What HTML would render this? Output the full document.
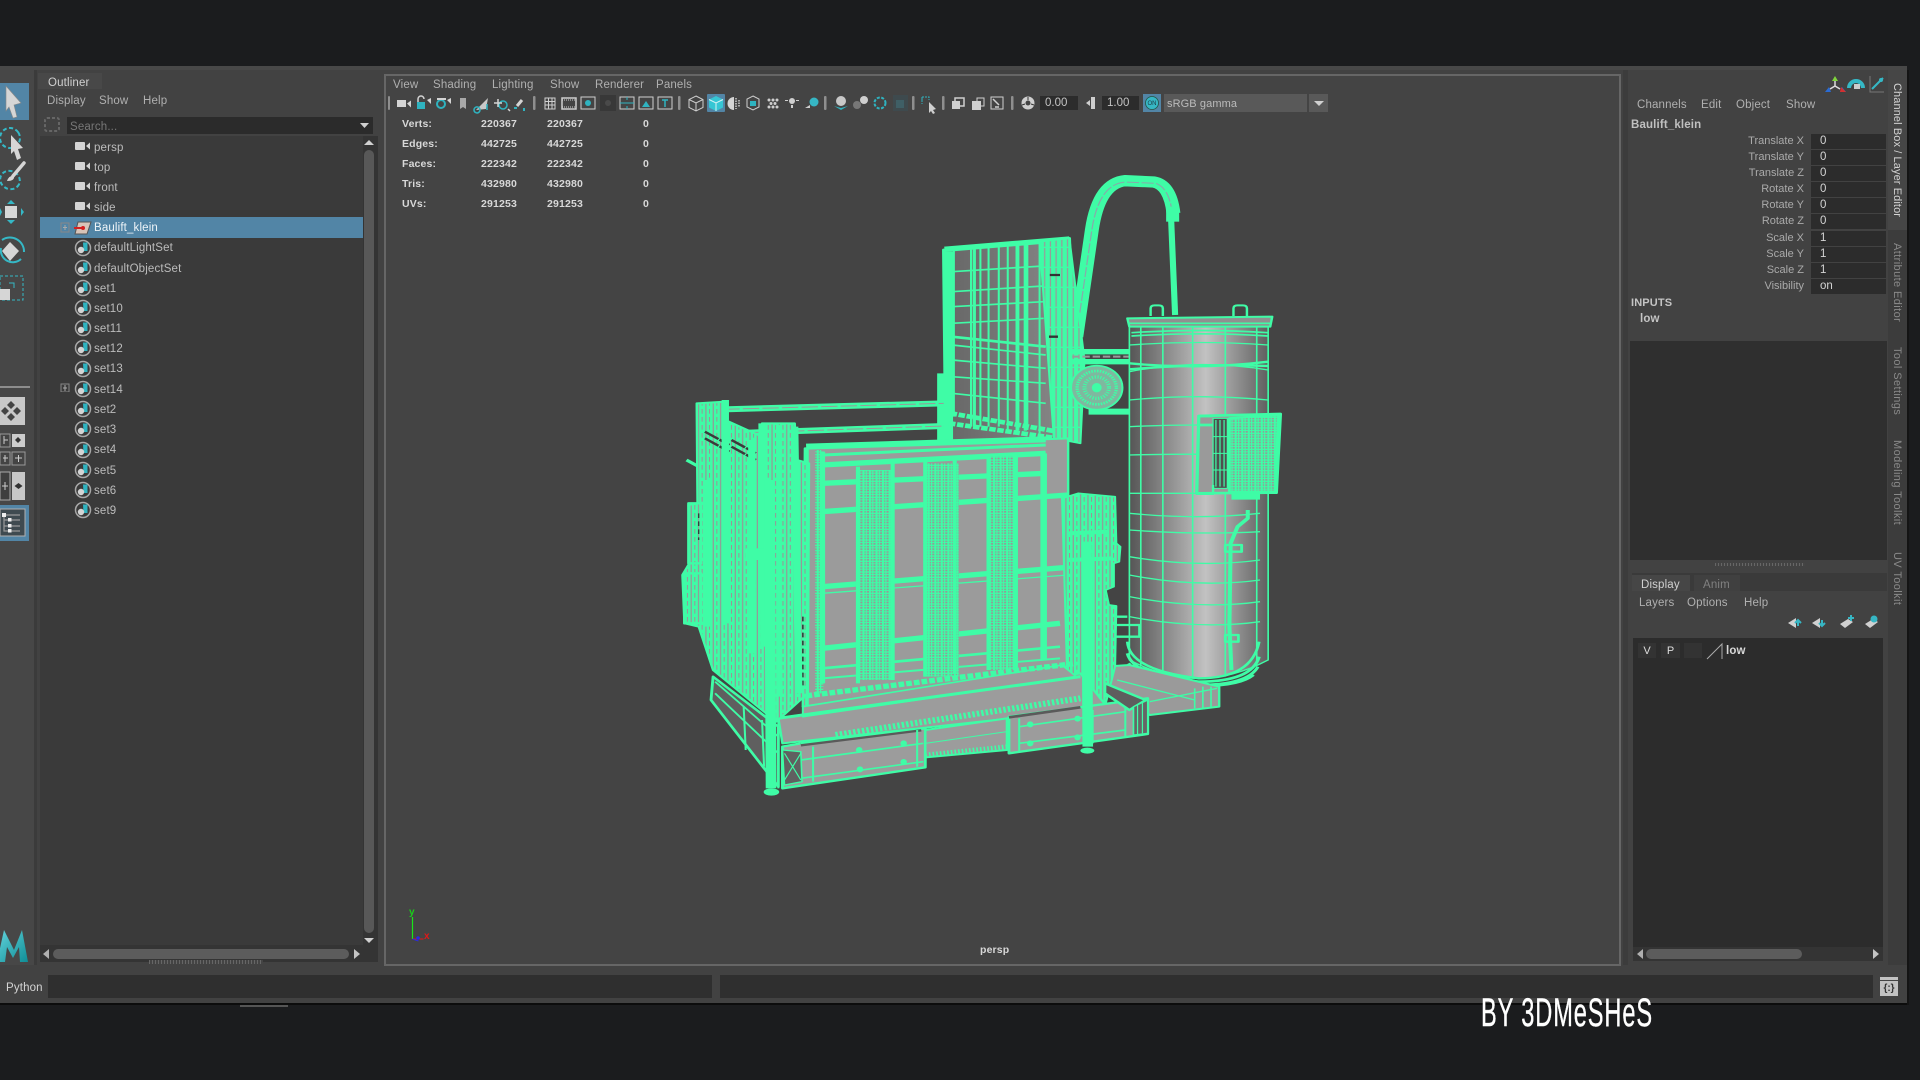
<!DOCTYPE html>
<html><head><meta charset="utf-8"><title>Maya</title>
<style>
html,body{margin:0;padding:0;width:1920px;height:1080px;overflow:hidden;background:#1b1c1e;font-family:"Liberation Sans",sans-serif;}
.a{position:absolute}
.t{position:absolute;white-space:nowrap;font-size:11.5px;line-height:14px;color:#c4c4c4;letter-spacing:.15px;margin-top:1px}
.o{color:#bcbcbc}
.b{font-weight:bold;color:#d8d8d8;font-size:10.5px}
.c{position:absolute;left:1811px;width:75px;height:15px;background:#2c2c2c;color:#d4d4d4;font-size:11.5px;line-height:15px;text-indent:9px;margin-top:1px}
.l{position:absolute;right:116px;font-size:11px;line-height:15px;color:#aaa;white-space:nowrap;margin-top:1px}
.v{position:absolute;white-space:nowrap;font-size:11px;line-height:14px;color:#8a8a8a;transform-origin:0 0;transform:rotate(90deg);letter-spacing:.4px}
</style></head><body>
<svg width="0" height="0" style="position:absolute">
<defs>
<symbol id="cam" viewBox="0 0 16 10"><rect x="0" y="1" width="10" height="8" rx="1" fill="#d4d4d4"/><path d="M11 5 15 1.500V8.500Z" fill="#d4d4d4"/></symbol>
<symbol id="set" viewBox="0 0 18 18"><circle cx="9" cy="9" r="7.500" fill="none" stroke="#a8a8a8" stroke-width="1.500"/><path d="M9 3.500h4.500v8.500h-4z" fill="#2fb3c0"/><circle cx="7" cy="11" r="3.200" fill="#d4d4d4"/></symbol>
<pattern id="h" width="14" height="60" patternUnits="userSpaceOnUse"><rect width="14" height="60" fill="#3ffca6"/><rect x="3" width="3" height="60" fill="#9a9a9a"/><rect y="20" width="14" height="4" fill="#3ffca6"/></pattern>
<pattern id="h2" width="18" height="24" patternUnits="userSpaceOnUse"><rect width="18" height="24" fill="#3ffca6"/><rect x="3" y="0" width="3" height="24" fill="#979797"/><rect x="12" y="3" width="2.500" height="14" fill="#979797"/></pattern>
<pattern id="h3" width="16" height="16" patternUnits="userSpaceOnUse"><rect width="16" height="16" fill="#979797"/><rect width="5" height="16" fill="#3ffca6"/><rect x="8" width="3" height="16" fill="#3ffca6"/><rect y="2" width="16" height="4" fill="#3ffca6"/><rect y="10" width="16" height="3" fill="#3ffca6"/></pattern>
<linearGradient id="tank" x1="0" x2="1" y1="0" y2="0"><stop offset="0" stop-color="#555"/><stop offset=".15" stop-color="#737373"/><stop offset=".55" stop-color="#c2c2c2"/><stop offset=".85" stop-color="#808080"/><stop offset="1" stop-color="#5f5f5f"/></linearGradient>
<linearGradient id="panel" x1="0" x2="1" y1="0" y2="0"><stop offset="0" stop-color="#666"/><stop offset="1" stop-color="#8a8a8a"/></linearGradient>
<linearGradient id="mm" x1="0" x2="1" y1="0" y2="1"><stop offset="0" stop-color="#63d4dc"/><stop offset="1" stop-color="#0f8d96"/></linearGradient>
</defs></svg>

<!-- main frame -->
<div class="a" style="left:0;top:66px;width:1907px;height:937px;background:#424242;border-top:4px solid #484848;box-sizing:border-box"></div>
<div class="a" style="left:0;top:1003px;width:1907px;height:2px;background:#0c0c0c"></div>
<div class="a" style="left:1907px;top:70px;width:2px;height:935px;background:#141414"></div>
<div class="a" style="left:240px;top:1005px;width:48px;height:2px;background:#555"></div>

<!-- left toolbar -->
<div class="a" style="left:0;top:70px;width:34px;height:895px;background:#474747"></div>
<div class="a" style="left:34px;top:70px;width:3px;height:895px;background:#3b3b3b"></div>
<div class="a" style="left:0;top:83px;width:29px;height:37px;background:#5285a6"></div>
<div class="a" style="left:0;top:505px;width:29px;height:36px;background:#5285a6"></div>
<svg class="a" style="left:0;top:70px" width="34" height="900" viewBox="0 0 34 900">
<path d="M6 16 21 33 14 35 17 47 13 48 9 37 6 41Z" fill="#d6d6d6" stroke="#888" stroke-width=".6"/>
<ellipse cx="10" cy="68" rx="10" ry="10" transform="rotate(-35 10 68)" fill="none" stroke="#35b8c6" stroke-width="2" stroke-dasharray="4 2.500"/>
<path d="M11 65 23 78 18 79 21 88 17 90 14 81 11 84Z" fill="#d6d6d6"/>
<ellipse cx="10" cy="110" rx="10" ry="9" transform="rotate(25 10 110)" fill="none" stroke="#35b8c6" stroke-width="2" stroke-dasharray="4 2.500"/>
<path d="M24 93 13 106" stroke="#d6d6d6" stroke-width="3.500" stroke-linecap="round"/><path d="M7 111q2-6 7-5 1 5-7 5z" fill="#d6d6d6"/>
<rect x="5" y="136" width="12" height="12" fill="#d6d6d6"/><path d="M11 130l4 4h-8zM11 154l4-4h-8zM24 142l-3-4v8zM0 138v8l2-4z" fill="#35b8c6"/>
<path d="M2 170a14 14 0 0 1 22 12" fill="none" stroke="#35b8c6" stroke-width="2"/><path d="M1 178a12 12 0 0 0 20 11" fill="none" stroke="#35b8c6" stroke-width="2"/>
<path d="M10 172 19 181 10 191 2 181Z" fill="#d6d6d6"/>
<rect x="0" y="206" width="23" height="24" fill="none" stroke="#35b8c6" stroke-width="1" stroke-dasharray="3 2"/><path d="M9 213h5v5" fill="none" stroke="#35b8c6"/><rect x="0" y="219" width="10" height="11" fill="#d6d6d6"/>
<rect x="0" y="316" width="30" height="2" fill="#8d8d8d"/>
<rect x="0" y="327" width="25" height="28" fill="#c8c8c8"/><path d="M11 331l4 4-4 4-4-4zM5 337l4 4-4 4-4-4zM17 337l4 4-4 4-4-4zM11 343l4 4-4 4-4-4z" fill="#444"/>
<rect x="0" y="364" width="10" height="13" fill="#444" stroke="#999"/><path d="M4 370h4M4 366v8" stroke="#ccc"/>
<rect x="12" y="364" width="13" height="13" fill="#ccc"/><path d="M18 367l3 3-3 3-3-3z" fill="#333"/>
<rect x="0" y="382" width="10" height="13" fill="#444" stroke="#999"/><rect x="12" y="382" width="13" height="13" fill="#444" stroke="#999"/><path d="M15 388h7M18.500 385v7M3 388h5M5 385v7" stroke="#ccc"/>
<rect x="0" y="402" width="10" height="28" fill="#3f3f3f" stroke="#aaa"/><path d="M2 416h6M5 412v8" stroke="#ccc"/>
<rect x="12" y="402" width="13" height="28" fill="#c8c8c8"/><path d="M18.500 413l4 3-4 3-4-3z" fill="#333"/>
<rect x="0" y="439" width="25" height="27" fill="#3f4a50" stroke="#b0b0b0"/><path d="M4 445h16M10 450h10M10 456h10M10 461h10M4 445v16h5M4 450h5M4 456h5" stroke="#999" stroke-width="1.200" fill="none"/><rect x="2" y="443" width="4" height="4" fill="#eee"/><rect x="8" y="448" width="3.500" height="3.500" fill="#eee"/><rect x="8" y="454" width="3.500" height="3.500" fill="#eee"/><rect x="8" y="459" width="3.500" height="3.500" fill="#eee"/>
<path d="M-3 892 4 860 14 880 22 860 28 892H20L19 877 13 888 7 877 5 892Z" fill="url(#mm)"/>
</svg>

<!-- outliner -->
<div class="a" style="left:38px;top:73px;width:64px;height:16px;background:#484848"></div>
<div class="t" style="left:48px;top:75px;color:#d0d0d0">Outliner</div>
<div class="a" style="left:38px;top:89px;width:340px;height:876px;background:#424242"></div>
<div class="t" style="left:47px;top:93px;color:#b0b0b0">Display</div>
<div class="t" style="left:99px;top:93px;color:#b0b0b0">Show</div>
<div class="t" style="left:143px;top:93px;color:#b0b0b0">Help</div>
<svg class="a" style="left:44px;top:116px" width="16" height="17"><rect x="1" y="2" width="14" height="13" rx="2" fill="none" stroke="#666" stroke-width="2" stroke-dasharray="3 2"/></svg>
<div class="a" style="left:67px;top:117px;width:306px;height:17px;background:#2b2b2b"></div>
<div class="t" style="left:70px;top:119px;color:#777">Search...</div>
<svg class="a" style="left:359px;top:122px" width="12" height="8"><path d="M1 1h9L5.500 6z" fill="#d0d0d0"/></svg>
<div class="a" style="left:40px;top:136px;width:323px;height:809px;background:#3a3a3a"></div>
<div class="a" style="left:363px;top:136px;width:15px;height:826px;background:#343434"></div>
<div class="a" style="left:364px;top:150px;width:10px;height:783px;background:#585858;border-radius:5px"></div>
<svg class="a" style="left:362px;top:138px" width="15" height="10"><path d="M2 7h10L7 2z" fill="#d0d0d0"/></svg>
<svg class="a" style="left:362px;top:936px" width="15" height="9"><path d="M2 2h10L7 7z" fill="#d0d0d0"/></svg>
<div class="a" style="left:40px;top:945px;width:323px;height:17px;background:#343434"></div>
<div class="a" style="left:53px;top:949px;width:296px;height:10px;background:#5c5c5c;border-radius:5px"></div>
<svg class="a" style="left:41px;top:948px" width="320" height="12"><path d="M8 1v10L2 6z" fill="#b0b0b0"/><path d="M313 1v10l6-5z" fill="#c4c4c4"/></svg>
<div class="a" style="left:149px;top:960px;width:114px;height:4px;background:repeating-linear-gradient(90deg,#666 0 1px,#444 1px 3px)"></div>
<div class="a" style="left:40px;top:217px;width:323px;height:21px;background:#5285a6"></div>
<svg class="a" style="left:75px;top:140px" width="16" height="80">
<use href="#cam" x="0" y="1" width="16" height="10"/><use href="#cam" x="0" y="21" width="16" height="10"/><use href="#cam" x="0" y="41" width="16" height="10"/><use href="#cam" x="0" y="61" width="16" height="10"/>
</svg>
<svg class="a" style="left:73px;top:219px" width="20" height="18"><path d="M5 3h13l-4 12H2z" fill="#d8c4b8" stroke="#555"/><path d="M1 9h9" stroke="#d41f1f" stroke-width="2"/><circle cx="10" cy="9" r="2" fill="#d41f1f"/></svg>
<svg class="a" style="left:74px;top:238px" width="18" height="262">
<use href="#set" y="1" width="18" height="18"/><use href="#set" y="21" width="18" height="18"/><use href="#set" y="41" width="18" height="18"/><use href="#set" y="61" width="18" height="18"/><use href="#set" y="81" width="18" height="18"/><use href="#set" y="101" width="18" height="18"/><use href="#set" y="122" width="18" height="18"/><use href="#set" y="142" width="18" height="18"/><use href="#set" y="162" width="18" height="18"/><use href="#set" y="182" width="18" height="18"/><use href="#set" y="203" width="18" height="18"/><use href="#set" y="223" width="18" height="18"/><use href="#set" y="243" width="18" height="18"/>
</svg>
<svg class="a" style="left:74px;top:501px" width="18" height="18"><use href="#set" width="18" height="18"/></svg>
<svg class="a" style="left:60px;top:222px" width="11" height="170"><rect x="1" y="1" width="8" height="9" fill="none" stroke="#888"/><path d="M3 5.500h4M5 3v5" stroke="#aaa"/><rect x="1" y="162" width="8" height="8" fill="none" stroke="#888"/><path d="M3 166h4M5 163v6" stroke="#aaa"/></svg>
<div class="t o" style="left:94px;top:139.500px">persp</div>
<div class="t o" style="left:94px;top:159.500px">top</div>
<div class="t o" style="left:94px;top:179.500px">front</div>
<div class="t o" style="left:94px;top:199.500px">side</div>
<div class="t" style="left:94px;top:220px;color:#eef4f8">Baulift_klein</div>
<div class="t o" style="left:94px;top:240px">defaultLightSet</div>
<div class="t o" style="left:94px;top:260.500px">defaultObjectSet</div>
<div class="t o" style="left:94px;top:280.500px">set1</div>
<div class="t o" style="left:94px;top:300.500px">set10</div>
<div class="t o" style="left:94px;top:320.500px">set11</div>
<div class="t o" style="left:94px;top:341px">set12</div>
<div class="t o" style="left:94px;top:361px">set13</div>
<div class="t o" style="left:94px;top:381.500px">set14</div>
<div class="t o" style="left:94px;top:402px">set2</div>
<div class="t o" style="left:94px;top:422px">set3</div>
<div class="t o" style="left:94px;top:442px">set4</div>
<div class="t o" style="left:94px;top:462.500px">set5</div>
<div class="t o" style="left:94px;top:482.500px">set6</div>
<div class="t o" style="left:94px;top:503px">set9</div>

<!-- viewport -->
<div class="a" style="left:384px;top:74px;width:1237px;height:892px;background:#444;border:2px solid #666;box-sizing:border-box"></div>
<div class="t" style="left:393px;top:77px;color:#b0b0b0">View</div>
<div class="t" style="left:433px;top:77px;color:#b0b0b0">Shading</div>
<div class="t" style="left:492px;top:77px;color:#b0b0b0">Lighting</div>
<div class="t" style="left:550px;top:77px;color:#b0b0b0">Show</div>
<div class="t" style="left:595px;top:77px;color:#b0b0b0">Renderer</div>
<div class="t" style="left:656px;top:77px;color:#b0b0b0">Panels</div>

<!-- viewport toolbar icons -->
<svg class="a" style="left:384px;top:92px" width="1000" height="24" viewBox="384 92 1000 24" fill="none">
<g fill="#8f8f8f"><rect x="388" y="96" width="2" height="14" rx="1"/><rect x="533" y="96" width="2.500" height="14" rx="1"/><rect x="678" y="96" width="2.500" height="14" rx="1"/><rect x="824" y="96" width="2.500" height="14" rx="1"/><rect x="912" y="96" width="2.500" height="14" rx="1"/><rect x="942" y="96" width="2.500" height="14" rx="1"/><rect x="1011" y="96" width="2.500" height="14" rx="1"/></g>
<g fill="#d4d4d4"><rect x="397" y="100" width="9" height="7"/><path d="M407 103.500l4-3v7z"/></g>
<rect x="417" y="102" width="8" height="7" fill="#2fb3c0"/><path d="M418 102v-3a3 3 0 0 1 6 0" stroke="#d4d4d4" stroke-width="1.500"/><path d="M427 100l4-2v6z" fill="#d4d4d4"/>
<circle cx="441" cy="104" r="4" stroke="#2fb3c0" stroke-width="2"/><path d="M437 99h9" stroke="#d4d4d4" stroke-width="2"/><path d="M447 100l4-2v6z" fill="#d4d4d4"/>
<path d="M460 98h6v11l-3-2-3 2z" fill="#a8a8a8"/>
<path d="M476 110 488 98l-2 11z" fill="#c8c8c8"/><path d="M480 110a3 3 0 1 1 0-.1M487 104v6" stroke="#2fb3c0" stroke-width="1.500"/>
<circle cx="503" cy="105" r="4" stroke="#2fb3c0" stroke-width="1.500"/><path d="M498 99v8M494 103h8M508 109l2 2" stroke="#d4d4d4" stroke-width="1.500"/>
<path d="M522 100l-5 6" stroke="#d4d4d4" stroke-width="3"/><path d="M514 108h3M524 108v3" stroke="#2fb3c0" stroke-width="2"/>
<path d="M545 98h10v11h-10zM545 101.500h10M545 105h10M548.500 98v11M552 98v11" stroke="#cfcfcf"/>
<rect x="562" y="98" width="14" height="11" stroke="#cfcfcf" stroke-width="1.500"/><path d="M562 100h14M562 107h14" stroke="#cfcfcf" stroke-dasharray="1 1"/>
<rect x="581" y="97" width="14" height="12" stroke="#cfcfcf"/><circle cx="588" cy="103" r="3" fill="#2fb3c0"/>
<rect x="600" y="95" width="16" height="16" fill="#383838"/><circle cx="608" cy="103" r="3" fill="#4a4a4a"/>
<rect x="620" y="97" width="14" height="12" stroke="#cfcfcf"/><path d="M620 103h14M627 97v3M627 106v3" stroke="#2fb3c0"/>
<rect x="639" y="97" width="14" height="12" stroke="#cfcfcf"/><path d="M642 107l4-6 4 6z" fill="#2fb3c0"/>
<rect x="658" y="97" width="14" height="12" stroke="#cfcfcf"/><path d="M662 100h6M665 100v7" stroke="#2fb3c0" stroke-width="1.500"/>
<path d="M696 96l7 3.500v8l-7 3.500-7-3.500v-8zM689 99.500l7 3.500 7-3.500M696 103v8" stroke="#cfcfcf"/>
<rect x="707" y="94" width="18" height="18" rx="1" fill="#5285a6"/><path d="M716 96l7 3.500v8l-7 3.500-7-3.500v-8z" fill="#36c6d4"/><path d="M709 99.500l7 3.500 7-3.500M716 103v8" stroke="#d4f2f5"/>
<path d="M734 97a6.500 6.500 0 0 0 0 13z" fill="#d4d4d4"/><path d="M736 98v11M739 100v7" stroke="#aaa" stroke-width="2" stroke-dasharray="1.500 1"/>
<path d="M753 96l6 3v8l-6 3-6-3v-8z" stroke="#cfcfcf"/><path d="M750 101h6v5h-6z" fill="#2fb3c0"/>
<g fill="#cfcfcf"><circle cx="769" cy="100" r="1.500"/><circle cx="773" cy="100" r="1.500"/><circle cx="777" cy="100" r="1.500"/><circle cx="771" cy="103.500" r="1.500"/><circle cx="775" cy="103.500" r="1.500"/><circle cx="769" cy="107" r="1.500"/><circle cx="773" cy="107" r="1.500"/><circle cx="777" cy="107" r="1.500"/><circle cx="792" cy="101" r="3"/><path d="M791 105h2v3h-2zM785 100h3v1h-3zM796 100h3v1h-3z"/></g>
<circle cx="814" cy="102" r="4.500" fill="#36b6c4"/><path d="M805 108l5-3v3z" fill="#cfcfcf"/>
<circle cx="841" cy="101" r="5" fill="#c8c8c8"/><path d="M834 106l7 4 7-4-7 2z" fill="#2fb3c0"/>
<circle cx="864" cy="100" r="4" fill="#cfcfcf"/><circle cx="857" cy="105" r="4" fill="#777"/>
<circle cx="880" cy="103" r="5.500" stroke="#2fb3c0" stroke-width="2" stroke-dasharray="3 1.500"/>
<rect x="893" y="95" width="15" height="16" fill="#3e4a4e"/><rect x="896" y="100" width="8" height="8" fill="#3f5f66"/>
<path d="M922 100v-3h7v3M922 97v7" stroke="#2fb3c0" stroke-dasharray="2 1"/><path d="M929 102l7 7-3 1 2 3-2 1-2-3-2 2z" fill="#cfcfcf"/>
<rect x="952" y="101" width="8" height="8" fill="#cfcfcf"/><rect x="955" y="98" width="9" height="8" stroke="#cfcfcf" stroke-width="1.500"/>
<rect x="972" y="101" width="9" height="9" fill="#cfcfcf"/><path d="M977 101v-3h7v8h-3" stroke="#cfcfcf"/>
<rect x="991" y="97" width="12" height="12" stroke="#cfcfcf"/><path d="M993 99l6 6M999 107h-4" stroke="#cfcfcf" stroke-width="1.500"/>
<circle cx="1028" cy="103" r="6.500" fill="#cfcfcf"/><circle cx="1028" cy="103" r="2.500" fill="#444"/><path d="M1028 97v3M1022 105l3-1M1034 105l-3-1" stroke="#333"/>
<path d="M1086 103l4-3v6z" fill="#cfcfcf"/><rect x="1091" y="97" width="4" height="12" fill="#cfcfcf"/>
</svg>
<div class="a" style="left:1040px;top:96px;width:38px;height:14px;background:#2c2c2c;color:#c4c4c4;font-size:11.500px;line-height:15px;text-indent:5px">0.00</div>
<div class="a" style="left:1102px;top:96px;width:37px;height:14px;background:#2c2c2c;color:#c4c4c4;font-size:11.500px;line-height:15px;text-indent:5px">1.00</div>
<div class="a" style="left:1143px;top:94px;width:18px;height:18px;background:#5285a6"></div>
<svg class="a" style="left:1143px;top:94px" width="18" height="18"><circle cx="9" cy="9" r="6.500" fill="#36b6c4" stroke="#254" stroke-width=".8"/><text x="9" y="11" font-size="6" fill="#1d3a44" text-anchor="middle" font-family="Liberation Sans">ON</text></svg>
<div class="a" style="left:1164px;top:94px;width:143px;height:18px;background:#595959;color:#bbb;font-size:11px;line-height:21px;text-indent:3px;letter-spacing:.1px">sRGB gamma</div>
<div class="a" style="left:1309px;top:94px;width:19px;height:18px;background:#595959"></div>
<svg class="a" style="left:1313px;top:100px" width="12" height="7"><path d="M1 1h10L6 6z" fill="#d0d0d0"/></svg>

<!-- stats -->
<div class="t b" style="left:402px;top:115.500px">Verts:</div><div class="t b" style="left:481px;top:115.500px">220367</div><div class="t b" style="left:547px;top:115.500px">220367</div><div class="t b" style="left:643px;top:115.500px">0</div>
<div class="t b" style="left:402px;top:135.500px">Edges:</div><div class="t b" style="left:481px;top:135.500px">442725</div><div class="t b" style="left:547px;top:135.500px">442725</div><div class="t b" style="left:643px;top:135.500px">0</div>
<div class="t b" style="left:402px;top:156px">Faces:</div><div class="t b" style="left:481px;top:156px">222342</div><div class="t b" style="left:547px;top:156px">222342</div><div class="t b" style="left:643px;top:156px">0</div>
<div class="t b" style="left:402px;top:176px">Tris:</div><div class="t b" style="left:481px;top:176px">432980</div><div class="t b" style="left:547px;top:176px">432980</div><div class="t b" style="left:643px;top:176px">0</div>
<div class="t b" style="left:402px;top:196px">UVs:</div><div class="t b" style="left:481px;top:196px">291253</div><div class="t b" style="left:547px;top:196px">291253</div><div class="t b" style="left:643px;top:196px">0</div>
<div class="t b" style="left:980px;top:942px;font-size:10.500px">persp</div>

<!-- axis -->
<svg class="a" style="left:400px;top:905px" width="40" height="40"><path d="M12.500 12v22" stroke="#19e619" stroke-width="1.200"/><path d="M12.500 34h11" stroke="#e01818"/><path d="M12.500 34l6 2" stroke="#2a2ae6"/><circle cx="18" cy="33" r="1.800" fill="#2a2ae6"/><text x="9" y="10" font-size="10" font-weight="bold" fill="#19d019" font-family="Liberation Sans">y</text><text x="24" y="34" font-size="10" font-weight="bold" fill="#e01818" font-family="Liberation Sans">x</text></svg>

<!-- 3D MODEL -->
<svg class="a" style="left:660px;top:160px" width="640" height="660" viewBox="0 0 640 660" fill="none" stroke-linejoin="round">
<g transform="scale(.40816 .33333)" stroke="#3ffca6">
 <!-- hose -->
 <path d="M1020 530 1058 210Q1075 70 1140 62L1210 66Q1250 75 1258 160" stroke-width="34"/>
 <path d="M1020 530 1058 210Q1075 72 1140 66L1215 70Q1248 85 1255 160" stroke="#8aa" stroke-width="3" stroke-dasharray="30 6"/>
 <path d="M1252 170 1262 465" stroke-width="15"/>
 <path d="M1256 140v45" stroke-width="32"/>
 <!-- back panel -->
 <path d="M695 270 1003 235 1020 840 700 850Z" fill="url(#panel)" stroke-width="8"/>
 <path d="M707 275V850M690 640V850" stroke-width="22"/>
 <path d="M697 268 1003 237" stroke-width="16"/>
 <path d="M720 270V770M762 268V800M785 262V800M805 260V800M830 258V800M852 256V810M878 254V810M900 250V810M930 245V820" stroke-width="5"/>
 <path d="M770 268V800M875 252V812M895 250V812" stroke-width="8"/>
 <path d="M715 335 940 318M715 395 940 378M715 440 940 425M715 490 940 475M715 530 945 560M715 555 945 585M715 600 945 625M715 650 945 670M715 700 945 730" stroke-width="5"/>
 <path d="M715 530 945 560" stroke-width="8"/>
 <path d="M712 760 975 815M708 790 975 835" stroke-width="14" stroke-dasharray="16 4"/>
 <path d="M930 245 1003 235 1040 600 1030 850 965 835Z" fill="url(#h)" stroke-width="5"/>
 <path d="M955 345h25M953 530h22" stroke="#333" stroke-width="7"/>
 <!-- brackets + wheel -->
 <path d="M1010 575H1160M1010 605H1160" stroke-width="16"/><path d="M1010 590H1160" stroke="#999" stroke-width="6" stroke-dasharray="18 7"/>
 <path d="M1050 755H1160" stroke-width="18"/><path d="M1160 735V800" stroke-width="8"/>
 <ellipse cx="1070" cy="683" rx="63" ry="66" fill="#7fb89f" stroke-width="5"/>
 <ellipse cx="1070" cy="683" rx="48" ry="50" stroke-width="8" stroke-dasharray="4 3" />
 <ellipse cx="1070" cy="683" rx="30" ry="32" stroke-width="10" stroke-dasharray="3 4"/>
 <ellipse cx="1070" cy="683" rx="12" ry="14" fill="#3ffca6" stroke="none"/>
 <!-- rails -->
 <path d="M155 748 695 730" stroke-width="18"/><path d="M155 748 695 730" stroke="#999" stroke-width="3" stroke-dasharray="40 8"/>
 <path d="M170 820 695 798" stroke-width="18"/><path d="M170 820 695 798" stroke="#999" stroke-width="3" stroke-dasharray="40 8"/>
 <path d="M65 900 95 920" stroke-width="9"/>
 <!-- tank -->
 <path d="M1150 490H1490V1500Q1320 1610 1150 1500Z" fill="url(#tank)" stroke-width="4"/>
 <g stroke-width="4">
  <path d="M1178 480V1520M1232 480V1540M1305 480V1555M1385 480V1550M1462 480V1510"/>
  <path d="M1150 555Q1320 540 1490 555M1150 635Q1320 595 1490 630M1150 720Q1320 700 1490 720M1150 800Q1320 790 1490 800M1150 885Q1320 880 1490 885M1150 1000Q1320 1000 1490 1000M1150 1060Q1320 1080 1470 1060M1150 1110Q1320 1125 1470 1115M1150 1190Q1320 1225 1470 1200M1150 1245Q1320 1285 1470 1260M1150 1310Q1320 1350 1470 1325M1150 1370Q1320 1410 1470 1385"/>
 </g>
 <path d="M1145 475 1500 470 1495 500 1150 500Z" fill="#909090" stroke-width="6"/>
 <path d="M1150 490H1495M1155 518Q1320 505 1490 518M1155 528Q1320 515 1490 528" stroke-width="5"/>
 <path d="M1150 610Q1320 630 1490 605M1150 628Q1320 610 1490 618" stroke-width="7"/>
 <path d="M1202 468V445Q1202 436 1212 436H1222Q1232 436 1232 445V468M1405 468V445Q1405 436 1415 436H1428Q1438 436 1438 445V468" stroke-width="6"/>
 <!-- tank bottom rings -->
 <path d="M1145 1445Q1150 1530 1320 1555Q1450 1555 1468 1445" stroke-width="7"/>
 <path d="M1145 1480Q1160 1550 1320 1565Q1450 1565 1468 1490M1148 1510Q1180 1565 1320 1575Q1440 1575 1465 1520" stroke-width="8"/>
 <path d="M1155 1535Q1230 1590 1320 1578 1420 1580 1455 1545" stroke-width="6"/>
 <!-- box on tank -->
 <path d="M1320 768 1520 762 1510 998 1315 1000Z" fill="#9a9a9a" stroke-width="8"/>
 <path d="M1322 768H1355M1322 795H1360" stroke-width="8"/>
 <path d="M1355 775H1390V985H1355Z" fill="#4f4f4f" stroke-width="3"/>
 <path d="M1362 780V980M1372 780V980M1382 780V980M1355 830H1390M1355 880H1390M1355 930H1390" stroke-width="3"/>
 <path d="M1395 775 1515 765 1508 995H1395Z" fill="url(#h3)" stroke-width="7"/>
 <path d="M1400 1010H1470" stroke-width="18"/><path d="M1315 975V1002H1355V975" stroke-width="6"/>
 <!-- pipe on tank -->
 <path d="M1440 1050 1440 1075 1415 1100 1398 1150 1395 1400 1400 1530" stroke-width="10"/>
 <path d="M1385 1155h40v20h-40zM1385 1425h32v20h-32z" stroke-width="7"/>
</g>
<g transform="translate(0 320) scale(.40816 .33333)" stroke="#3ffca6">
 <!-- base right extension -->
 <path d="M1090 560 1150 555 1370 620 1370 680 1200 705 1090 610Z" fill="#9a9a9a" stroke-width="6"/>
 <path d="M1120 600 1310 660M1200 665 1365 625M1310 625V685M1330 620V685M1350 620V685" stroke-width="4"/>
 <path d="M1115 435H1175V470H1115ZM1115 410H1145" stroke-width="7"/>
 <!-- left side base -->
 <path d="M130 590 290 740 290 920 125 660Z" fill="#5f5f5f" stroke-width="7"/>
 <path d="M135 605 290 770M135 640 290 820M205 680 210 810M250 720 255 860" stroke-width="5"/>
 <path d="M140 510 240 610 240 600 130 470Z" fill="#666" stroke-width="6"/>
 <path d="M145 520 185 565 145 565Z" fill="#333" stroke="none"/>
 <!-- main panel -->
 <path d="M355 -95 1000 -125 1000 560 350 680Z" fill="#9b9b9b" stroke-width="6"/>
 <path d="M358 -100 945 -122" stroke-width="18"/>
 <path d="M400 -75 945 -105" stroke-width="9"/>
 <path d="M395 -45 945 -80" stroke-width="16"/>
 <path d="M380 -90H400V640H380Z" fill="url(#h3)" stroke="none"/>
 <path d="M398 -85V610" stroke-width="13"/>
 <path d="M360 -95V680" stroke-width="9"/>
 <path d="M398 10 945 -20" stroke-width="16"/>
 <path d="M395 95 1000 45" stroke-width="16"/>
 <path d="M398 320 1000 262" stroke-width="16"/>
 <path d="M398 340 1000 285" stroke-width="4"/>
 <path d="M398 505 980 430" stroke-width="16"/>
 <path d="M398 565 980 500" stroke-width="8"/>
 <path d="M398 595 980 535" stroke-width="6"/>
 <path d="M480 -30H568V600H480ZM645 -50H732V590H645ZM800 -70H876V570H800Z" fill="url(#h3)" stroke="none"/>
 <path d="M485 -40V610M570 -50V600M650 -60V590M722 -60V580M805 -70V570M872 -75V570" stroke-width="10"/>
 <path d="M940 -80V540" stroke-width="16"/>
 <!-- right mass -->
 <path d="M985 55 1025 40 1115 50 1118 190 1128 200 1125 245 1112 250 1112 320 1092 330 1100 375 1118 378 1115 560 1090 680 1000 685Z" fill="url(#h2)" stroke-width="5"/>
 <path d="M1000 160 1100 155M1000 240 1110 235" stroke-width="12"/>
 <!-- deck -->
 <path d="M290 715 1030 580 1095 680 1045 690 300 790Z" fill="#9c9c9c" stroke-width="6"/>
 <path d="M350 680 985 555 1020 590 350 710Z" fill="#9c9c9c" stroke-width="5"/>
 <path d="M340 650 1020 550" stroke-width="16" stroke-dasharray="14 5"/>
 <path d="M290 715 1030 590" stroke-width="9"/>
 <path d="M430 765 1030 655" stroke-width="18" stroke-dasharray="6 5"/>
 <!-- left mass -->
 <path d="M90 -230 160 -235 160 -180 250 -130 250 -170 330 -170 335 -60 365 -50 362 640 285 725 130 570 95 440 60 430 55 285 72 250 70 75 92 70Z" fill="url(#h2)" stroke-width="6"/>
 <path d="M110 -145 170 -105M110 -125 170 -85M175 -120 235 -80M175 -100 235 -60" stroke="#3b3b3b" stroke-width="7" stroke-dasharray="40 3"/>
 <path d="M155 40V120M230 90V120M232 300V350M350 410V620M95 100V180" stroke="#3a3a3a" stroke-width="4" stroke-dasharray="14 10"/>
 <path d="M160 -240V430M225 -120V520M115 0V440M250 -170 255 500M330 -160 340 640" stroke-width="18"/>
 <path d="M290 -165 295 650" stroke-width="12"/>
 <path d="M60 280H100V430H60ZM70 70H100V250H70Z" stroke-width="7"/>
 <path d="M210 205H280V240H210Z" fill="#3ffca6" stroke="none"/>
 <!-- drawers -->
 <path d="M300 800 345 790 650 745 650 862 300 925Z" fill="#9c9c9c" stroke-width="7"/>
 <path d="M345 795 640 750" stroke="#5a5a5a" stroke-width="9"/>
 <path d="M345 790 640 745M345 840 645 790M345 895 645 845M375 800V905M630 750V860" stroke-width="5"/>
 <path d="M300 810 345 815 348 905 305 915Z" fill="#606060" stroke-width="4"/><path d="M305 820 345 900M345 820 305 900" stroke-width="3"/>
 <ellipse cx="488" cy="810" rx="8" ry="9" fill="#3ffca6" stroke="none"/><ellipse cx="490" cy="868" rx="8" ry="9" fill="#3ffca6" stroke="none"/><ellipse cx="597" cy="790" rx="8" ry="9" fill="#3ffca6" stroke="none"/><ellipse cx="597" cy="846" rx="8" ry="9" fill="#3ffca6" stroke="none"/>
 <path d="M650 750 850 715 850 810 650 832Z" fill="#9c9c9c" stroke-width="6"/>
 <path d="M650 790 850 755" stroke-width="3"/><path d="M650 825 850 800" stroke-width="14" stroke-dasharray="4 5"/>
 <path d="M855 710 1195 655 1195 762 855 820Z" fill="#9c9c9c" stroke-width="7"/>
 <path d="M855 712 1030 682" stroke="#5a5a5a" stroke-width="8"/>
 <path d="M880 740 1140 695M880 790 1140 750M880 715V815M1060 690V790M1140 665V770" stroke-width="5"/>
 <path d="M1090 610 1190 660 1150 690 1090 640Z" fill="#5e5e5e" stroke-width="7"/>
 <path d="M1160 680 1195 660 1195 760 1160 765Z" fill="#666" stroke-width="4"/>
 <path d="M1170 675V765M1182 665V760" stroke-width="3"/>
 <ellipse cx="907" cy="733" rx="8" ry="9" fill="#3ffca6" stroke="none"/><ellipse cx="1023" cy="716" rx="8" ry="9" fill="#3ffca6" stroke="none"/><ellipse cx="907" cy="790" rx="8" ry="9" fill="#3ffca6" stroke="none"/><ellipse cx="1023" cy="772" rx="8" ry="9" fill="#3ffca6" stroke="none"/>
 <!-- posts -->
 <path d="M1045 185 1048 800" stroke-width="26"/>
 <ellipse cx="1047" cy="812" rx="17" ry="9" fill="#3ffca6" stroke="none"/>
 <path d="M268 0 272 925" stroke-width="26"/>
 <ellipse cx="273" cy="936" rx="19" ry="11" fill="#3ffca6" stroke="none"/>
 <path d="M290 715V925" stroke-width="5"/>
</g>
</svg>

<!-- right panel -->
<div class="a" style="left:1623px;top:70px;width:5px;height:895px;background:#3c3c3c"></div>
<svg class="a" style="left:1824px;top:72px" width="65" height="22">
<path d="M11 4l3 5h-6z" fill="#7fd43c"/><path d="M11 9v5M11 14l-5 3M11 14l5 3" stroke="#ddd" stroke-width="1.500"/><path d="M1 20l4-5 2 5zM22 20l-4-5-2 5z" fill="#2a6bd4"/><path d="M17 15l5 5h-6z" fill="#d43030"/>
<path d="M25 16a7 7 0 0 1 14 0" fill="none" stroke="#35b8c6" stroke-width="4"/><rect x="30" y="12" width="6" height="5" fill="#ccc"/>
<path d="M48 17 59 6" stroke="#35b8c6" stroke-width="2"/><path d="M46 4v16h14" stroke="#777" fill="none"/><circle cx="57" cy="8" r="2" fill="#35b8c6"/>
</svg>
<div class="t" style="left:1637px;top:97px;color:#b0b0b0">Channels</div>
<div class="t" style="left:1701px;top:97px;color:#b0b0b0">Edit</div>
<div class="t" style="left:1736px;top:97px;color:#b0b0b0">Object</div>
<div class="t" style="left:1786px;top:97px;color:#b0b0b0">Show</div>
<div class="t" style="left:1631px;top:117px;font-weight:bold;color:#c0c0c0;font-size:11.500px">Baulift_klein</div>
<div class="l" style="top:133px">Translate X</div><div class="c" style="top:133px">0</div>
<div class="l" style="top:149px">Translate Y</div><div class="c" style="top:149px">0</div>
<div class="l" style="top:165px">Translate Z</div><div class="c" style="top:165px">0</div>
<div class="l" style="top:181px">Rotate X</div><div class="c" style="top:181px">0</div>
<div class="l" style="top:197px">Rotate Y</div><div class="c" style="top:197px">0</div>
<div class="l" style="top:213px">Rotate Z</div><div class="c" style="top:213px">0</div>
<div class="l" style="top:230px">Scale X</div><div class="c" style="top:230px">1</div>
<div class="l" style="top:246px">Scale Y</div><div class="c" style="top:246px">1</div>
<div class="l" style="top:262px">Scale Z</div><div class="c" style="top:262px">1</div>
<div class="l" style="top:278px">Visibility</div><div class="c" style="top:278px">on</div>
<div class="t" style="left:1631px;top:295px;font-weight:bold;color:#c4c4c4;font-size:11px">INPUTS</div>
<div class="t" style="left:1640px;top:311px;font-weight:bold;color:#c4c4c4;font-size:11.500px">low</div>
<div class="a" style="left:1630px;top:341px;width:257px;height:219px;background:#2f2f2f"></div>
<div class="a" style="left:1715px;top:563px;width:90px;height:3px;background:repeating-linear-gradient(90deg,#666 0 1px,#444 1px 3px)"></div>
<div class="a" style="left:1632px;top:573px;width:255px;height:18px;background:#3a3a3a"></div>
<div class="a" style="left:1632px;top:575px;width:58px;height:16px;background:#464646"></div>
<div class="a" style="left:1694px;top:575px;width:46px;height:16px;background:#404040"></div>
<div class="t" style="left:1641px;top:577px;color:#d0d0d0">Display</div>
<div class="t" style="left:1703px;top:577px;color:#808080">Anim</div>
<div class="t" style="left:1639px;top:595px;color:#b0b0b0">Layers</div>
<div class="t" style="left:1687px;top:595px;color:#b0b0b0">Options</div>
<div class="t" style="left:1744px;top:595px;color:#b0b0b0">Help</div>
<svg class="a" style="left:1785px;top:615px" width="95" height="16">
<path d="M3 8 11 3V13Z" fill="#d0d0d0"/><path d="M13 11V5M10 8l3-3 3 3" stroke="#36b6c4" stroke-width="2" fill="none"/>
<path d="M27 8 35 3V13Z" fill="#d0d0d0"/><path d="M37 5v6M34 8l3 3 3-3" stroke="#36b6c4" stroke-width="2" fill="none"/>
<path d="M55 9l8-5 5 3-8 6z" fill="#d0d0d0"/><path d="M63 3h6M66 0v6" stroke="#36b6c4" stroke-width="2"/>
<path d="M80 9l8-5 5 3-8 6z" fill="#d0d0d0"/><circle cx="89" cy="4" r="3.500" fill="#36b6c4"/>
</svg>
<div class="a" style="left:1633px;top:638px;width:250px;height:309px;background:#2c2c2c"></div>
<div class="a" style="left:1638px;top:643px;width:18px;height:15px;background:#333;color:#ddd;font-size:11px;line-height:16px;text-align:center">V</div>
<div class="a" style="left:1661px;top:643px;width:19px;height:15px;background:#333;color:#ddd;font-size:11px;line-height:16px;text-align:center">P</div>
<div class="a" style="left:1684px;top:643px;width:18px;height:15px;background:#333"></div>
<svg class="a" style="left:1706px;top:642px" width="19" height="18"><path d="M1 17 16 2V17" fill="none" stroke="#aaa"/></svg>
<div class="t" style="left:1726px;top:643px;color:#d8d8d8;font-weight:bold;font-size:11.500px">low</div>
<div class="a" style="left:1633px;top:947px;width:250px;height:14px;background:#343434"></div>
<div class="a" style="left:1646px;top:949px;width:156px;height:10px;background:#5c5c5c;border-radius:5px"></div>
<svg class="a" style="left:1635px;top:948px" width="247" height="12"><path d="M8 1v10L2 6z" fill="#b0b0b0"/><path d="M238 1v10l6-5z" fill="#c4c4c4"/></svg>

<!-- right vertical tabs -->
<div class="a" style="left:1888px;top:70px;width:19px;height:160px;background:#464646"></div>
<div class="a" style="left:1888px;top:230px;width:19px;height:735px;background:#3c3c3c"></div>
<div class="v" style="left:1904px;top:83px;color:#d4d4d4;letter-spacing:.1px">Channel Box / Layer Editor</div>
<div class="v" style="left:1904px;top:243px">Attribute Editor</div>
<div class="v" style="left:1904px;top:347px">Tool Settings</div>
<div class="v" style="left:1904px;top:440px">Modeling Toolkit</div>
<div class="v" style="left:1904px;top:552px">UV Toolkit</div>

<!-- command line -->
<div class="t" style="left:6px;top:980px;color:#d4d4d4">Python</div>
<div class="a" style="left:48px;top:975px;width:664px;height:23px;background:#2f2f2f"></div>
<div class="a" style="left:720px;top:975px;width:1153px;height:23px;background:#2f2f2f"></div>
<div class="a" style="left:1880px;top:977px;width:18px;height:19px;background:#c2c2c2"></div>
<div class="a" style="left:1880px;top:980px;width:18px;height:1px;background:#444"></div>
<div class="a" style="left:1880px;top:982px;width:18px;height:14px;color:#333;font-size:10px;font-weight:bold;line-height:14px;text-align:center">{:}</div>

<!-- watermark -->
<div class="a" style="left:1481px;top:992px;white-space:nowrap;color:#fff;font-family:'Liberation Sans',sans-serif;font-size:40px;line-height:42px;transform-origin:0 0;transform:scaleX(.59);letter-spacing:1.500px;-webkit-text-stroke:.4px #fff">BY 3DMeSHeS</div>
</body></html>
